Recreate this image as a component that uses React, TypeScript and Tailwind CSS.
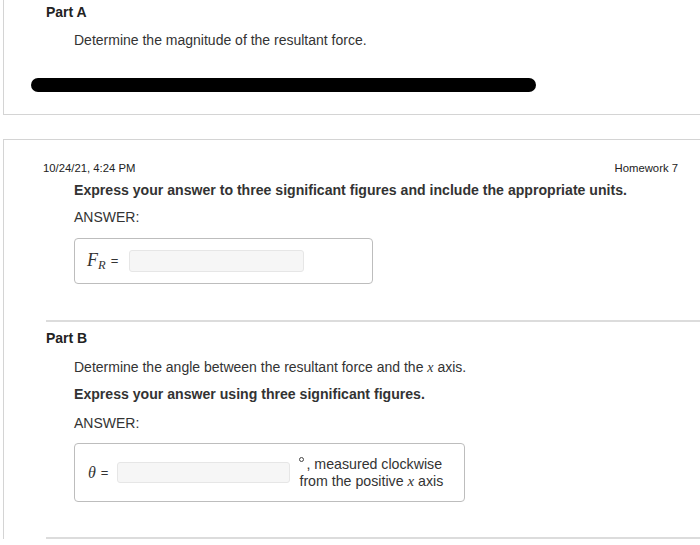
import React from "react";

const sans = { fontFamily: '"Liberation Sans", Arial, sans-serif' };
const serif = { fontFamily: '"Liberation Serif", "DejaVu Serif", serif' };

export default function App() {
  return (
    <div className="w-[700px] h-[545px] bg-white overflow-hidden text-[#333]" style={sans}>
      {/* Part A box */}
      <div className="ml-[3px] border-l border-b border-[#d4d4d4] h-[115px] pt-[3px]">
        <div className="ml-[42px] h-[18px] leading-[18px] text-[14px] font-bold text-[#222]">Part A</div>
        <div className="ml-[70px] mt-[10px] h-[18px] leading-[18px] text-[14px] text-[#333]">
          Determine the magnitude of the resultant force.
        </div>
        <div className="ml-[27px] mt-[29px] w-[505px] h-[14px] rounded-full bg-black" />
      </div>

      {/* Part B box */}
      <div className="ml-[3px] mt-[24px] border-l border-t border-[#d4d4d4] pt-[21px]">
        <div className="flex justify-between pl-[39px] pr-[22px] h-[14px] leading-[14px] text-[11.3px] text-[#222]">
          <span>10/24/21, 4:24 PM</span>
          <span>Homework 7</span>
        </div>
        <div className="ml-[70px] mt-[6px] h-[18px] leading-[18px] text-[14.1px] font-bold text-[#333]">
          Express your answer to three significant figures and include the appropriate units.
        </div>
        <div className="ml-[70px] mt-[9px] h-[18px] leading-[18px] text-[14px] text-[#333]">ANSWER:</div>
        <div className="ml-[70px] mt-[12px] w-[299px] h-[46px] rounded-[4px] border border-[#bdbdbd] flex items-center pl-[12px]">
          <span className="text-[18px] leading-[20px] italic text-[#333]" style={serif}>
            F<span className="relative top-[3px] text-[12.5px]">R</span>
          </span>
          <span className="ml-[5px] text-[13px] text-[#333]">=</span>
          <div className="ml-[11px] w-[175px] h-[22px] rounded-[3px] bg-[#f6f6f6] border border-[#e6e6e6]" />
        </div>

        <div className="ml-[42px] mt-[36px] border-t-2 border-[#dcdcdc]" />
        <div className="ml-[42px] mt-[7px] h-[18px] leading-[18px] text-[14px] font-bold text-[#222]">Part B</div>
        <div className="ml-[70px] mt-[11px] h-[18px] leading-[18px] text-[14px] text-[#333]">
          Determine the angle between the resultant force and the{" "}
          <span className="italic" style={serif}>x</span> axis.
        </div>
        <div className="ml-[70px] mt-[9px] h-[18px] leading-[18px] text-[14.1px] font-bold text-[#333]">
          Express your answer using three significant figures.
        </div>
        <div className="ml-[70px] mt-[11px] h-[18px] leading-[18px] text-[14px] text-[#333]">ANSWER:</div>
        <div className="ml-[70px] mt-[11px] w-[391px] h-[59px] rounded-[4px] border border-[#bdbdbd] flex items-center pl-[13px]">
          <span className="text-[16px] italic text-[#333]" style={serif}>θ</span>
          <span className="ml-[5px] text-[13px] text-[#333]">=</span>
          <div className="ml-[9px] w-[173px] h-[21px] rounded-[3px] bg-[#f6f6f6] border border-[#e6e6e6]" />
          <div className="ml-[9px] text-[14.2px] leading-[17px] text-[#333]">
            <div className="flex items-start">
              <span className="mt-[1px] mr-[2px] inline-block w-[5px] h-[5px] rounded-full border border-[#444]" />
              <span>, measured clockwise</span>
            </div>
            <div>
              from the positive <span className="italic text-[15px]" style={serif}>x</span> axis
            </div>
          </div>
        </div>
        <div className="ml-[42px] mt-[35px] border-t-2 border-[#dcdcdc]" />
      </div>
    </div>
  );
}
